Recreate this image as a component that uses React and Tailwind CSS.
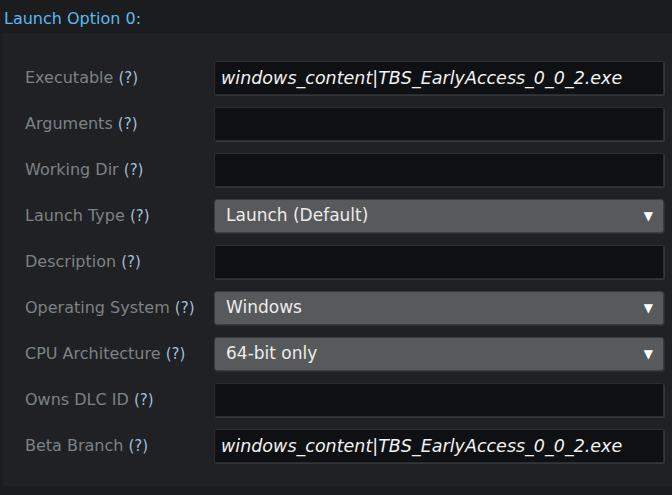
import React from "react";

const rows = [
  { label: "Executable", type: "text", value: "windows_content|TBS_EarlyAccess_0_0_2.exe" },
  { label: "Arguments", type: "text", value: "" },
  { label: "Working Dir", type: "text", value: "" },
  { label: "Launch Type", type: "select", value: "Launch (Default)" },
  { label: "Description", type: "text", value: "" },
  { label: "Operating System", type: "select", value: "Windows" },
  { label: "CPU Architecture", type: "select", value: "64-bit only" },
  { label: "Owns DLC ID", type: "text", value: "" },
  { label: "Beta Branch", type: "text", value: "windows_content|TBS_EarlyAccess_0_0_2.exe" },
];

function Field({ row }) {
  if (row.type === "select") {
    return (
      <div className="flex h-[34px] flex-1 items-center justify-between rounded-[3px] border border-[#3a3c3f] bg-[#58595b] pl-[11px] pr-[10px] shadow-[1px_1px_0_#2c2e31]">
        <span className="text-[17px] text-[#ececec]">{row.value}</span>
        <span className="text-[12px] text-white">▼</span>
      </div>
    );
  }
  return (
    <div className="flex h-[34px] flex-1 items-center rounded-[2px] border border-[#2b2d30] bg-[#0f1013] pl-[6px] shadow-[1px_1px_0_#34363a]">
      <span className="text-[17.5px] italic text-[#f2f2f2]">{row.value}</span>
    </div>
  );
}

export default function App() {
  return (
    <div className="min-h-[495px] w-[672px] overflow-hidden bg-[#1b1c1e] pb-[8px] font-['DejaVu_Sans',sans-serif]">
      <div className="flex h-[33px] items-center pl-[4px] pt-[4px] text-[16px] text-[#5cb8f2]">
        Launch Option 0:
      </div>
      <div className="ml-[3px] flex flex-col gap-[12px] bg-[#1f2124] pb-[23px] pl-[22px] pr-[8px] pt-[28px]">
        {rows.map((row) => (
          <div key={row.label} className="flex items-center">
            <div className="w-[189px] text-[16px] text-[#7d8286]">
              {row.label}{" "}
              <span className="text-[15px] font-medium text-[#a6bfd6]">(?)</span>
            </div>
            <Field row={row} />
          </div>
        ))}
      </div>
    </div>
  );
}
